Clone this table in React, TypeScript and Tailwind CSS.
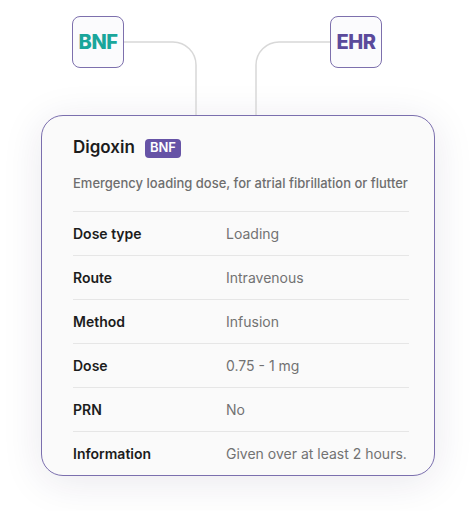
const rows = [
  { label: 'Dose type', value: 'Loading' },
  { label: 'Route', value: 'Intravenous' },
  { label: 'Method', value: 'Infusion' },
  { label: 'Dose', value: '0.75 - 1 mg' },
  { label: 'PRN', value: 'No' },
  { label: 'Information', value: 'Given over at least 2 hours.' },
]

function SourceBox({ text, color }: { text: string; color: string }) {
  return (
    <div className="w-[52px] h-[52px] rounded-[8px] border-[1.5px] border-[#7d70ad] bg-[#fbfbfd] flex items-center justify-center">
      <span className={`text-[20px] font-extrabold tracking-[-0.5px] ${color}`}>{text}</span>
    </div>
  )
}

export default function App() {
  return (
    <div className="w-[474px] h-[511px] bg-white overflow-hidden" style={{ fontFamily: 'Inter, "Noto Sans", sans-serif' }}>
      {/* Sources + connectors */}
      <div className="relative h-[115px]">
        <svg className="absolute inset-0" width="474" height="115" viewBox="0 0 474 115" fill="none">
          <path d="M123 42 H173 A23 23 0 0 1 196 65 V115" stroke="#d8d8d8" strokeWidth="1.5" />
          <path d="M330 42 H279 A23 23 0 0 0 256 65 V115" stroke="#d8d8d8" strokeWidth="1.5" />
        </svg>
        <div className="relative flex pl-[72px] pt-[16px] gap-[206px]">
          <SourceBox text="BNF" color="text-[#1aa69b]" />
          <SourceBox text="EHR" color="text-[#5b4a9b]" />
        </div>
      </div>

      {/* Card */}
      <div className="ml-[41px] w-[394px] rounded-[22px] border-[1.5px] border-[#7b6fae] bg-[#fafafa] shadow-[0_6px_40px_rgba(40,30,80,0.10)] pl-[31px] pr-[25px] pt-[20px]">
        <div className="h-[24px] flex items-center gap-[10px]">
          <h1 className="text-[17px] font-semibold text-[#1c1c1c]">Digoxin</h1>
          <span className="h-[19px] px-[5px] rounded-[4px] bg-[#6653a6] text-white text-[13px] font-semibold flex items-center">
            BNF
          </span>
        </div>
        <p className="mt-[13px] h-[20px] leading-[20px] text-[13px] font-medium text-[#6e6e6e] whitespace-nowrap">
          Emergency loading dose, for atrial fibrillation or flutter
        </p>
        <div className="mt-[18px]">
          {rows.map((row) => (
            <div key={row.label} className="h-[44px] border-t border-[#e6e6e6] flex items-center">
              <div className="w-[153px] text-[14px] font-semibold text-[#1c1c1c]">{row.label}</div>
              <div className="text-[14px] text-[#727272]">{row.value}</div>
            </div>
          ))}
        </div>
      </div>
    </div>
  )
}
